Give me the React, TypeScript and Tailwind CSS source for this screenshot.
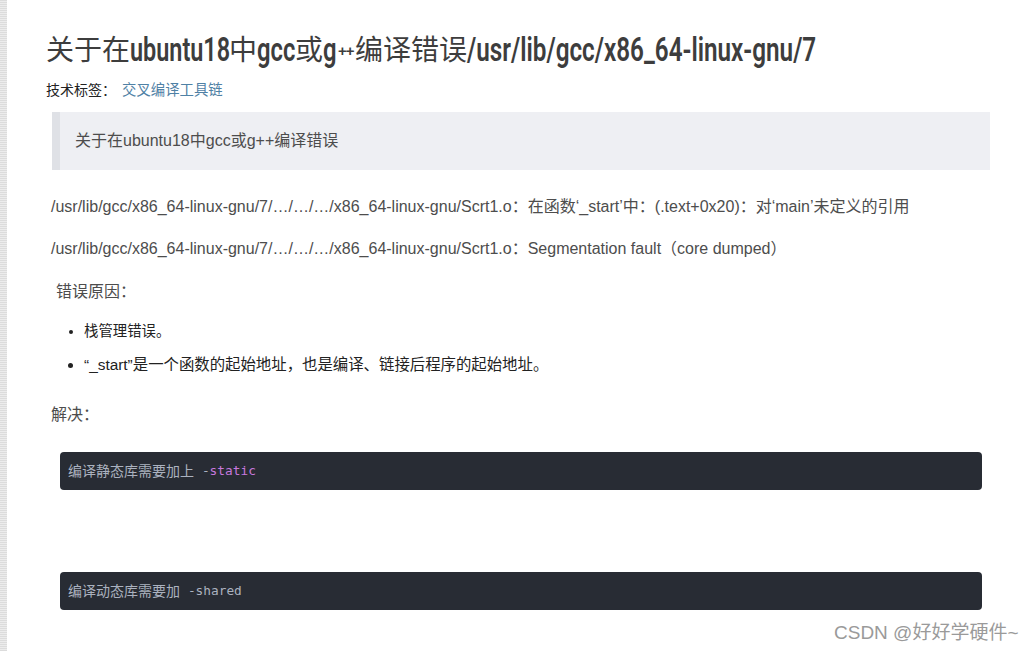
const latin = "inline-block whitespace-nowrap";
const inner = "inline-block origin-left font-['Roboto'] font-semibold text-[33px]";

function Squeezed({ text, width, scale }: { text: string; width: string; scale: string }) {
  return (
    <span className={`${latin} ${width}`}>
      <span className={`${inner} ${scale}`}>{text}</span>
    </span>
  );
}

function Code({ label, children }: { label: string; children: React.ReactNode }) {
  return (
    <div className="ml-[60px] mr-[50px] h-[38px] rounded-[4px] bg-[#282c34] px-2 flex items-center text-[14px] text-[#abb2bf] whitespace-pre">
      <span>{label}</span>
      <span className="ml-[4px] font-['DejaVu_Sans_Mono'] text-[12.8px]">{children}</span>
    </div>
  );
}

export default function App() {
  return (
    <div className="relative h-[651px] w-[1032px] overflow-hidden bg-white font-['Liberation_Sans','Noto_Sans_CJK_SC',sans-serif] text-[#4d4d4d]">
      <div className="flex h-full">
        <div className="w-[7px] shrink-0 bg-[#e3e3e3] bg-[repeating-linear-gradient(0deg,#dcdcdc_0,#dcdcdc_1px,#ececec_1px,#ececec_2px)]" />
        <main className="flex-1 min-w-0">
          <h1 className="ml-[39px] mt-[30px] h-[42px] flex items-center whitespace-nowrap text-[28px] leading-[42px] text-[#3d3d3d]">
            <span>关于在</span>
            <Squeezed text="ubuntu18" width="w-[99px]" scale="scale-x-[0.71]" />
            <span>中</span>
            <Squeezed text="gcc" width="w-[38px]" scale="scale-x-[0.72]" />
            <span>或</span>
            <Squeezed text="g" width="w-[15px]" scale="scale-x-[0.72]" />
            <span className="inline-block w-[17px] text-[15px] font-bold tracking-[-1px]">++</span>
            <span>编译错误</span>
            <Squeezed text="/usr/lib/gcc/x86_64-linux-gnu/7" width="w-[350px]" scale="scale-x-[0.735]" />
          </h1>
          <div className="ml-[39px] mt-[8px] h-[20px] flex items-center text-[14px] leading-[20px] text-[#222]">
            <span>技术标签：</span>
            <a className="ml-[6px] text-[14.4px] text-[#4f81a5]">交叉编译工具链</a>
          </div>
          <blockquote className="ml-[45px] mr-[42px] mt-[12px] h-[58px] flex items-center border-l-[8px] border-[#dfe1e6] bg-[#eeeff3] pl-[15px] text-[16px]">
            关于在ubuntu18中gcc或g++编译错误
          </blockquote>
          <p className="ml-[44px] mt-[25px] h-[24px] leading-[24px] text-[16px] whitespace-nowrap">
            /usr/lib/gcc/x86_64-linux-gnu/7/…/…/…/x86_64-linux-gnu/Scrt1.o：在函数‘_start’中：(.text+0x20)：对‘main’未定义的引用
          </p>
          <p className="ml-[44px] mt-[18px] h-[24px] leading-[24px] text-[16px] whitespace-nowrap">
            /usr/lib/gcc/x86_64-linux-gnu/7/…/…/…/x86_64-linux-gnu/Scrt1.o：Segmentation fault（core dumped）
          </p>
          <p className="ml-[49px] mt-[19px] h-[24px] leading-[24px] text-[16px]">错误原因：</p>
          <ul className="ml-[77px] mt-[16px] list-disc text-[#222] leading-[22px]">
            <li className="h-[22px] text-[14.4px]">栈管理错误。</li>
            <li className="mt-[12px] h-[22px] text-[15.4px] whitespace-nowrap">“_start”是一个函数的起始地址，也是编译、链接后程序的起始地址。</li>
          </ul>
          <p className="ml-[44px] mt-[27px] h-[24px] leading-[24px] text-[16px]">解决：</p>
          <div className="-ml-[7px] mt-[25px]">
            <Code label="编译静态库需要加上 ">
              <span className="text-[#abb2bf]">-</span>
              <span className="text-[#c678dd]">static</span>
            </Code>
            <div className="h-[82px]" />
            <Code label="编译动态库需要加 ">-shared</Code>
          </div>
        </main>
      </div>
      <div className="absolute left-[834px] top-[621px] text-[19px] leading-[24px] text-[#9a9a9a] whitespace-nowrap">
        CSDN @好好学硬件~
      </div>
    </div>
  );
}
